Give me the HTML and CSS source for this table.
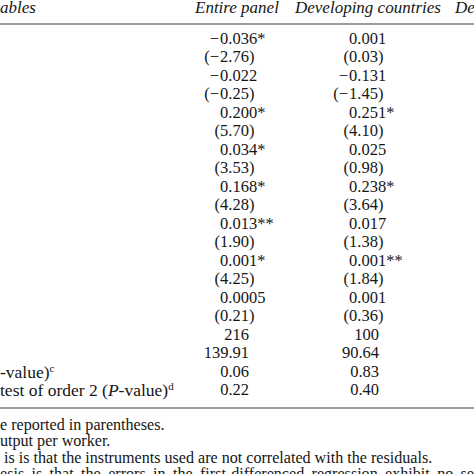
FILE: index.html
```html
<!DOCTYPE html>
<html lang="en">
<head>
    <meta charset="UTF-8">
    <meta name="viewport" content="width=device-width, initial-scale=1.0">
    <title>Regression results</title>
    <link rel="stylesheet" href="styles.css">
</head>
<body>
    <div class="head">
        <span>ables</span>
        <span>Entire panel</span>
        <span>Developing countries</span>
        <span>De</span>
    </div>
    <div class="rule top"></div>
    <div class="rows">
        <span></span><span class="pre"><span class="m">−</span></span><span>0.036*</span><span class="pre"></span><span>0.001</span>
        <span></span><span class="pre">(<span class="m">−</span></span><span>2.76)</span><span class="pre">(</span><span>0.03)</span>
        <span></span><span class="pre"><span class="m">−</span></span><span>0.022</span><span class="pre"><span class="m">−</span></span><span>0.131</span>
        <span></span><span class="pre">(<span class="m">−</span></span><span>0.25)</span><span class="pre">(<span class="m">−</span></span><span>1.45)</span>
        <span></span><span class="pre"></span><span>0.200*</span><span class="pre"></span><span>0.251*</span>
        <span></span><span class="pre">(</span><span>5.70)</span><span class="pre">(</span><span>4.10)</span>
        <span></span><span class="pre"></span><span>0.034*</span><span class="pre"></span><span>0.025</span>
        <span></span><span class="pre">(</span><span>3.53)</span><span class="pre">(</span><span>0.98)</span>
        <span></span><span class="pre"></span><span>0.168*</span><span class="pre"></span><span>0.238*</span>
        <span></span><span class="pre">(</span><span>4.28)</span><span class="pre">(</span><span>3.64)</span>
        <span></span><span class="pre"></span><span>0.013**</span><span class="pre"></span><span>0.017</span>
        <span></span><span class="pre">(</span><span>1.90)</span><span class="pre">(</span><span>1.38)</span>
        <span></span><span class="pre"></span><span>0.001*</span><span class="pre"></span><span>0.001**</span>
        <span></span><span class="pre">(</span><span>4.25)</span><span class="pre">(</span><span>1.84)</span>
        <span></span><span class="pre"></span><span>0.0005</span><span class="pre"></span><span>0.001</span>
        <span></span><span class="pre">(</span><span>0.21)</span><span class="pre">(</span><span>0.36)</span>
        <span></span><span class="sum c1">216</span><span class="sum c2">100</span>
        <span></span><span class="sum c1">139.91</span><span class="sum c2">90.64</span>
        <span class="label">-value)<sup>c</sup></span><span class="sum c1">0.06</span><span class="sum c2">0.83</span>
        <span class="label">test of order 2 (<i>P</i>-value)<sup>d</sup></span><span class="sum c1">0.22</span><span class="sum c2">0.40</span>
    </div>
    <div class="rule bottom"></div>
    <div class="notes">
        <div>e reported in parentheses.</div>
        <div>utput per worker.</div>
        <div class="in">is is that the instruments used are not correlated with the residuals.</div>
        <div class="just">esis is that the errors in the first-differenced regression exhibit no se</div>
    </div>
</body>
</html>
```

FILE: styles.css
```css
html, body { margin: 0; overflow: hidden; background: #fff; }
body { font-family: "Liberation Serif", "Times New Roman", serif; font-size: 16.5px; color: #161616; }
.head { display: grid; grid-template-columns: 195px 100px 160px 1fr; margin-top: -1px; font-size: 17px; line-height: 18.5px; font-style: italic; white-space: nowrap; }
.rule { height: 2px; background: #9c9c9c; }
.rule.top { margin-top: 5px; }
.rule.bottom { margin-top: 7px; }
.rows { display: grid; grid-template-columns: 190px 30px 110px 19px 1fr; grid-auto-rows: 18.5px; line-height: 18.5px; margin-top: 5px; white-space: nowrap; }
.pre { text-align: right; }
.m { margin-right: 1px; }
.sum { grid-column: span 2; text-align: right; }
.sum.c1 { padding-right: 81px; }
.sum.c2 { padding-right: 95px; }
.label { font-size: 17.5px; }
.label sup { font-size: 11px; line-height: 0; vertical-align: 6px; }
.notes { margin-top: 8px; font-size: 16.1px; line-height: 16.5px; }
.notes .in { padding-left: 4px; }
.notes .just { text-align: justify; text-align-last: justify; }
```
